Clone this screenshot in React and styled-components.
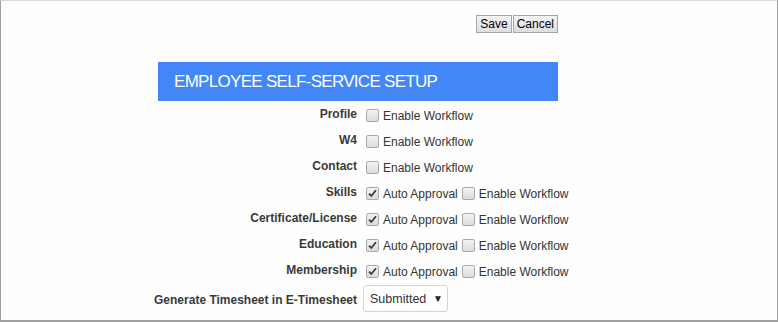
import React from 'react';
import styled, { createGlobalStyle } from 'styled-components';

const GlobalStyle = createGlobalStyle`
  html, body {
    margin: 0;
    padding: 0;
    background: #ffffff;
  }
  body {
    font-family: "Liberation Sans", Arial, sans-serif;
  }
`;

const Frame = styled.div`
  width: 778px;
  height: 322px;
  box-sizing: border-box;
  border: 1px solid #a0a0a0;
  border-top-color: #d8d8d8;
  border-bottom-width: 2px;
  background: #fefefe;
  overflow: hidden;
`;

const Panel = styled.div`
  width: 400px;
  margin-left: 157px;
  display: flex;
  flex-direction: column;
`;

const Toolbar = styled.div`
  display: flex;
  justify-content: flex-end;
  margin-top: 14px;
  height: 18px;
`;

const Button = styled.button`
  font-family: "Liberation Sans", Arial, sans-serif;
  font-size: 12px;
  color: #000;
  height: 18px;
  padding: 0 3px;
  margin: 0 0 0 1px;
  border: 1px solid #a7a7a7;
  border-radius: 0;
  background: linear-gradient(#f4f4f4, #dedede);
  line-height: 16px;
`;

const Header = styled.div`
  margin-top: 29px;
  height: 39px;
  background: #4287f5;
  color: #ffffff;
  font-size: 17px;
  letter-spacing: -0.7px;
  display: flex;
  align-items: center;
  padding-left: 16px;
  padding-top: 1px;
  box-sizing: border-box;
`;

const Form = styled.div`
  display: grid;
  grid-template-columns: 206px max-content;
  column-gap: 6px;
  margin-left: -7px;
  margin-top: 1px;
`;

const Label = styled.div`
  font-size: 12px;
  font-weight: bold;
  color: #3a3a3a;
  text-align: right;
  height: ${({ $tall }) => ($tall ? '28px' : '26px')};
  padding-top: ${({ $tall }) => ($tall ? '9px' : '5px')};
  box-sizing: border-box;
  white-space: nowrap;
`;

const Value = styled.div`
  display: flex;
  align-items: center;
  height: ${({ $tall }) => ($tall ? '28px' : '26px')};
  padding-top: ${({ $tall }) => ($tall ? '0' : '2px')};
  box-sizing: border-box;
  font-size: 12px;
  color: #333;
  white-space: nowrap;
`;

const Option = styled.label`
  display: flex;
  align-items: center;
  margin-right: 1px;
`;

const Box = styled.span`
  width: 11px;
  height: 11px;
  margin: -1px 4px 0 3px;
  border: 1px solid #a9a9a9;
  border-radius: 2px;
  background: linear-gradient(#f3f3f3, #dcdcdc);
  display: flex;
  align-items: center;
  justify-content: center;
  flex-shrink: 0;
`;

const Select = styled.div`
  width: 85px;
  height: 27px;
  box-sizing: border-box;
  border: 1px solid #d4d4d4;
  border-radius: 3px;
  display: flex;
  align-items: center;
  justify-content: space-between;
  padding: 1px 4px 0 6px;
  font-size: 12.5px;
  color: #333;
  background: #fff;
`;

const Arrow = styled.span`
  font-size: 10px;
  color: #222;
`;

const Check = ({ checked }) => (
  <Box>
    {checked && (
      <svg width="9" height="9" viewBox="0 0 9 9">
        <path d="M1 4.6 L3.3 7 L8 1.2" fill="none" stroke="#3a3a3a" strokeWidth="1.8" />
      </svg>
    )}
  </Box>
);

const rows = [
  { name: 'Profile', auto: false },
  { name: 'W4', auto: false },
  { name: 'Contact', auto: false },
  { name: 'Skills', auto: true },
  { name: 'Certificate/License', auto: true },
  { name: 'Education', auto: true },
  { name: 'Membership', auto: true },
];

export default function App() {
  return (
    <Frame>
      <GlobalStyle />
      <Panel>
        <Toolbar>
          <Button>Save</Button>
          <Button>Cancel</Button>
        </Toolbar>
        <Header>EMPLOYEE SELF-SERVICE SETUP</Header>
        <Form>
          {rows.map(row => (
            <React.Fragment key={row.name}>
              <Label>{row.name}</Label>
              <Value>
                {row.auto && (
                  <Option>
                    <Check checked />
                    Auto Approval
                  </Option>
                )}
                <Option>
                  <Check />
                  Enable Workflow
                </Option>
              </Value>
            </React.Fragment>
          ))}
          <Label $tall>Generate Timesheet in E-Timesheet</Label>
          <Value $tall>
            <Select>
              <span>Submitted</span>
              <Arrow>▼</Arrow>
            </Select>
          </Value>
        </Form>
      </Panel>
    </Frame>
  );
}
